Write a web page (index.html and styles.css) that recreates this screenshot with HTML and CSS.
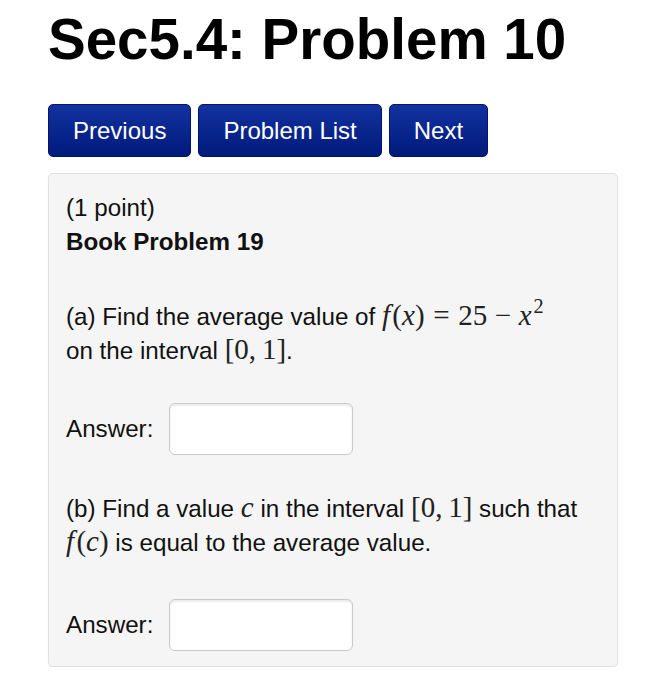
FILE: index.html
```html
<!DOCTYPE html>
<html lang="en">
<head>
    <meta charset="UTF-8">
    <meta name="viewport" content="width=device-width, initial-scale=1.0">
    <title>Sec5.4: Problem 10</title>
    <link rel="stylesheet" href="styles.css">
</head>
<body>
    <div class="page">
        <h1 class="page-title">Sec5.4: Problem 10</h1>

        <div class="nav-buttons">
            <button class="nav-button">Previous</button>
            <button class="nav-button">Problem List</button>
            <button class="nav-button">Next</button>
        </div>

        <div class="problem">
            <div class="points">(1 point)</div>
            <div class="problem-name">Book Problem 19</div>

            <p class="part part-a">
                (a) Find the average value of
                <span class="math"><i class="fn">f</i>(<i>x</i>)<span class="rel">=</span>25<span class="bin">&minus;</span><i>x</i><sup>2</sup></span>
                <br>on the interval <span class="math">[0,&thinsp;1]</span>.
            </p>

            <div class="answer-row">
                <label class="answer-label" for="ans1">Answer:</label>
                <input class="answer-input" id="ans1" type="text">
            </div>

            <p class="part part-b">
                (b) Find a value <span class="math"><i>c</i></span> in the interval <span class="math">[0,&thinsp;1]</span> such that
                <br><span class="math"><i class="fn">f</i>(<i>c</i>)</span> is equal to the average value.
            </p>

            <div class="answer-row">
                <label class="answer-label" for="ans2">Answer:</label>
                <input class="answer-input" id="ans2" type="text">
            </div>
        </div>
    </div>
</body>
</html>
```

FILE: styles.css
```css
/* Page */
body {
    margin: 0;
    background-color: #fff;
    color: #111;
    font-family: "Liberation Sans", Arial, Helvetica, sans-serif;
}

.page {
    padding: 8px 45px 0 48px;
}

.page-title {
    margin: 0 0 32px;
    font-size: 56.5px;
    line-height: 64px;
    font-weight: bold;
    color: #000;
}

/* Nav buttons */
.nav-buttons {
    display: flex;
    gap: 7px;
    margin-bottom: 16px;
}

.nav-button {
    padding: 11px 24px;
    font-family: inherit;
    font-size: 24px;
    line-height: 29px;
    color: #fff;
    background: linear-gradient(#13329f, #001a7c);
    border: 1px solid #00166a;
    border-radius: 5px;
    cursor: pointer;
}

/* Problem box */
.problem {
    width: 570px;
    box-sizing: border-box;
    padding: 17px 17px 15px;
    background-color: #f5f5f5;
    border: 1px solid #e1e1e1;
    border-radius: 5px;
    box-shadow: 0 1px 2px rgba(0, 0, 0, 0.06);
    font-size: 24.2px;
    line-height: 34px;
}

.problem-name {
    font-weight: bold;
}

.part {
    margin: 0;
}

.part-a {
    margin-top: 41px;
}

.part-b {
    margin-top: 37px;
}

.math {
    font-family: "Liberation Serif", "Times New Roman", serif;
    font-size: 29px;
    line-height: 1;
    color: #222;
}

.math i {
    font-style: italic;
}

.math .fn {
    margin-right: 0.08em;
}

.math .rel {
    margin: 0 0.3em;
}

.math .bin {
    margin: 0 0.26em;
}

.math sup {
    font-size: 70%;
    line-height: 0;
    position: relative;
    top: -0.08em;
    margin-left: 2px;
}

/* Answers */
.answer-row {
    display: flex;
    align-items: center;
    gap: 16px;
    margin-top: 35px;
}

.answer-row:last-child {
    margin-top: 39px;
}

.answer-input {
    width: 184px;
    height: 52px;
    box-sizing: border-box;
    background-color: #fff;
    border: 1px solid #c9c9c9;
    border-radius: 6px;
    box-shadow: inset 0 2px 2px rgba(0, 0, 0, 0.08);
    font-size: 22px;
}
```
